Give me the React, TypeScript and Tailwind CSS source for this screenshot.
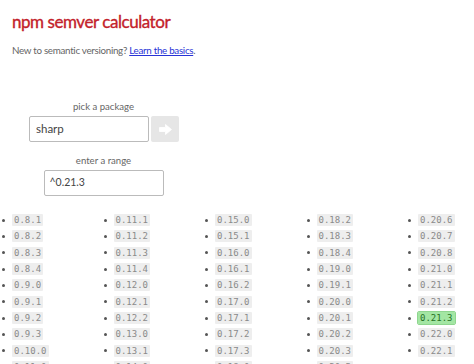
import React from "react";

const cols: string[][] = [
  ["0.8.1", "0.8.2", "0.8.3", "0.8.4", "0.9.0", "0.9.1", "0.9.2", "0.9.3", "0.10.0", "0.11.0"],
  ["0.11.1", "0.11.2", "0.11.3", "0.11.4", "0.12.0", "0.12.1", "0.12.2", "0.13.0", "0.13.1", "0.14.0"],
  ["0.15.0", "0.15.1", "0.16.0", "0.16.1", "0.16.2", "0.17.0", "0.17.1", "0.17.2", "0.17.3", "0.18.0"],
  ["0.18.2", "0.18.3", "0.18.4", "0.19.0", "0.19.1", "0.20.0", "0.20.1", "0.20.2", "0.20.3", "0.20.5"],
  ["0.20.6", "0.20.7", "0.20.8", "0.21.0", "0.21.1", "0.21.2", "0.21.3", "0.22.0", "0.22.1"],
];

const sans = "font-['Lato','Open_Sans',sans-serif]";

export default function App() {
  return (
    <div className={`h-[364px] w-[474px] overflow-hidden bg-white ${sans}`}>
      <div className="pl-[12px] pt-[10px]">
        <h1 className="text-[17px] leading-[24px] font-normal text-[#c3212a] tracking-[-0.45px] [-webkit-text-stroke:0.35px_#c3212a]">
          npm semver calculator
        </h1>
        <p className="mt-[10px] text-[9.8px] leading-[12px] tracking-[-0.3px] text-[#666]">
          New to semantic versioning?{" "}
          <a href="#" className="text-[#2733d6] underline">
            Learn the basics
          </a>
          .
        </p>
      </div>

      <div className="mt-[44px] w-[207px] flex flex-col items-center">
        <div className="text-[9.6px] leading-[13px] text-[#666]">pick a package</div>
        <div className="mt-[3px] ml-[1px] flex gap-[2px]">
          <div className="w-[120px] h-[26px] border border-[#bbb] rounded-[2px] flex items-center pl-[6px] text-[11.5px] text-[#444]">
            sharp
          </div>
          <div className="w-[28px] h-[26px] bg-[#e6e6e6] rounded-[2px] flex items-center justify-center">
            <svg width="13" height="11" viewBox="0 0 13 11">
              <path d="M0.5 3.5 H6.5 V0.5 L12.5 5.5 L6.5 10.5 V7.5 H0.5 Z" fill="#fff" stroke="#fff" strokeWidth="0.8" strokeLinejoin="round" />
            </svg>
          </div>
        </div>
        <div className="mt-[12px] text-[9.6px] leading-[13px] text-[#666]">enter a range</div>
        <div className="mt-[3px] w-[120px] h-[26px] border border-[#bbb] rounded-[2px] flex items-center pl-[5px] text-[10.5px] text-[#444]">
          ^0.21.3
        </div>
      </div>

      <div className="mt-[16px] grid grid-cols-[101.5px_101.5px_101.5px_101.5px_1fr]">
        {cols.map((col, ci) => (
          <ul key={ci} className="flex flex-col">
            {col.map((v) => {
              const hit = v === "0.21.3";
              return (
                <li key={v} className="h-[16.33px] flex items-center">
                  <span className="ml-[2px] mr-[7px] w-[3px] h-[3px] rounded-full bg-[#555]" />
                  <code
                    className={`font-['DejaVu_Sans_Mono',monospace] text-[9px] leading-[12px] px-[2px] rounded-[1px] ${
                      hit ? "bg-[#a3e6a3] text-[#267326] outline outline-1 outline-[#8fd68f]" : "bg-[#eeeeee] text-[#8a8a8a]"
                    }`}
                  >
                    {v}
                  </code>
                </li>
              );
            })}
          </ul>
        ))}
      </div>
    </div>
  );
}
